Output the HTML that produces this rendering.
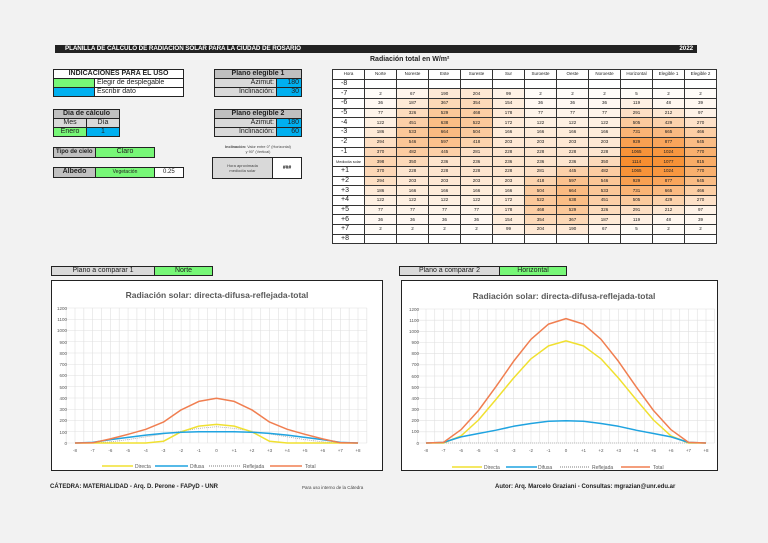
<!DOCTYPE html>
<html><head><meta charset="utf-8">
<style>
*{margin:0;padding:0;box-sizing:border-box}
body{width:768px;height:543px;background:#f2f2f2;font-family:"Liberation Sans",sans-serif;position:relative;overflow:hidden;color:#222}
.a{position:absolute}
.b{position:absolute;border:1px solid #222;font-size:7px;line-height:8px;white-space:nowrap}
.g1{background:#c0c0c0}.g2{background:#d9d9d9}.bl{background:#00b0f0}.gr{background:#77f777}.w{background:#fff}
.c{text-align:center}.r{text-align:right;padding-right:2px}
table{border-collapse:collapse;position:absolute;left:332px;top:69px;width:385px;table-layout:fixed}
td{border:1px solid #333;height:9.7px;font-size:4.5px;text-align:center;padding:0;background:#fff;line-height:8px}
td.h{font-size:7px;text-align:left;padding-left:8px}
</style></head><body>
<div class="a" style="left:55px;top:45px;width:642px;height:8px;background:#222;color:#fff;font-size:6.3px;font-weight:bold;line-height:8px;padding-left:10px;letter-spacing:-0.1px">PLANILLA DE CÁLCULO DE RADIACIÓN SOLAR PARA LA CIUDAD DE ROSARIO<span style="position:absolute;right:4px">2022</span></div>

<div class="b w c" style="left:53px;top:69px;width:131px;height:10px;font-weight:bold">INDICACIONES PARA EL USO</div>
<div class="b gr" style="left:53px;top:78px;width:42px;height:10px"></div>
<div class="b w" style="left:94px;top:78px;width:90px;height:10px;padding-left:2px">Elegir de desplegable</div>
<div class="b bl" style="left:53px;top:87px;width:42px;height:10px"></div>
<div class="b w" style="left:94px;top:87px;width:90px;height:10px;padding-left:2px">Escribir dato</div>

<div class="b g1 c" style="left:214px;top:69px;width:88px;height:10px;font-weight:bold">Plano elegible 1</div>
<div class="b g2 r" style="left:214px;top:78px;width:63px;height:10px">Azimut:</div>
<div class="b bl r" style="left:276px;top:78px;width:26px;height:10px">180</div>
<div class="b g2 r" style="left:214px;top:87px;width:63px;height:10px">Inclinación:</div>
<div class="b bl r" style="left:276px;top:87px;width:26px;height:10px">30</div>

<div class="b g1 c" style="left:53px;top:109px;width:67px;height:10px;font-weight:bold">Día de cálculo</div>
<div class="b g2 c" style="left:53px;top:118px;width:34px;height:10px">Mes</div>
<div class="b g2 c" style="left:86px;top:118px;width:34px;height:10px">Día</div>
<div class="b gr c" style="left:53px;top:127px;width:34px;height:10px">Enero</div>
<div class="b bl c" style="left:86px;top:127px;width:34px;height:10px">1</div>

<div class="b g1 c" style="left:214px;top:109px;width:88px;height:10px;font-weight:bold">Plano elegible 2</div>
<div class="b g2 r" style="left:214px;top:118px;width:63px;height:10px">Azimut:</div>
<div class="b bl r" style="left:276px;top:118px;width:26px;height:10px">180</div>
<div class="b g2 r" style="left:214px;top:127px;width:63px;height:10px">Inclinación:</div>
<div class="b bl r" style="left:276px;top:127px;width:26px;height:10px">60</div>

<div class="b g1" style="left:53px;top:147px;width:43px;height:11px;font-weight:bold;font-size:6px;padding-left:2px">Tipo de cielo</div>
<div class="b gr c" style="left:95px;top:147px;width:60px;height:11px">Claro</div>

<div class="b g1 c" style="left:53px;top:167px;width:43px;height:11px;font-weight:bold">Albedo</div>
<div class="b gr c" style="left:95px;top:167px;width:60px;height:11px;font-size:5px">Vegetación</div>
<div class="b w" style="left:154px;top:167px;width:30px;height:11px;padding-left:8px;font-size:6px">0.25</div>

<div class="a c" style="left:212px;top:145px;width:92px;font-size:3.8px;line-height:4.5px;color:#444"><b>Inclinación:</b> Valor entre 0° (Horizontal)<br>y 90° (Vertical)</div>
<div class="b g2 c" style="left:212px;top:157px;width:61px;height:22px;font-size:4px;line-height:5px;padding-top:5px;color:#444">Hora aproximada<br>mediodía solar</div>
<div class="b w c" style="left:272px;top:157px;width:30px;height:22px;font-size:5px;line-height:20px;font-weight:bold">###</div>

<div class="a" style="left:370px;top:56px;font-size:7px;font-weight:bold">Radiación total en W/m²</div>

<table id="t">
<tr><td>Hora</td><td>Norte</td><td>Noreste</td><td>Este</td><td>Sureste</td><td>Sur</td><td>Suroeste</td><td>Oeste</td><td>Noroeste</td><td>Horizontal</td><td>Elegible 1</td><td>Elegible 2</td></tr>
<tr><td class="h">-8</td><td></td><td></td><td></td><td></td><td></td><td></td><td></td><td></td><td></td><td></td><td></td></tr>
<tr><td class="h">-7</td><td>2</td><td>67</td><td>190</td><td>204</td><td>99</td><td>2</td><td>2</td><td>2</td><td>5</td><td>2</td><td>2</td></tr>
<tr><td class="h">-6</td><td>36</td><td>187</td><td>367</td><td>354</td><td>154</td><td>36</td><td>36</td><td>36</td><td>119</td><td>48</td><td>39</td></tr>
<tr><td class="h">-5</td><td>77</td><td>326</td><td>529</td><td>468</td><td>178</td><td>77</td><td>77</td><td>77</td><td>291</td><td>212</td><td>97</td></tr>
<tr><td class="h">-4</td><td>122</td><td>451</td><td>638</td><td>522</td><td>172</td><td>122</td><td>122</td><td>122</td><td>505</td><td>429</td><td>270</td></tr>
<tr><td class="h">-3</td><td>186</td><td>533</td><td>664</td><td>504</td><td>166</td><td>166</td><td>166</td><td>166</td><td>731</td><td>665</td><td>466</td></tr>
<tr><td class="h">-2</td><td>294</td><td>546</td><td>597</td><td>418</td><td>203</td><td>203</td><td>203</td><td>203</td><td>929</td><td>877</td><td>645</td></tr>
<tr><td class="h">-1</td><td>370</td><td>482</td><td>445</td><td>281</td><td>228</td><td>228</td><td>228</td><td>228</td><td>1065</td><td>1024</td><td>770</td></tr>
<tr><td style="font-size:3.8px">Mediodía solar</td><td>398</td><td>350</td><td>236</td><td>236</td><td>236</td><td>236</td><td>236</td><td>350</td><td>1114</td><td>1077</td><td>815</td></tr>
<tr><td class="h">+1</td><td>370</td><td>228</td><td>228</td><td>228</td><td>228</td><td>281</td><td>445</td><td>482</td><td>1065</td><td>1024</td><td>770</td></tr>
<tr><td class="h">+2</td><td>294</td><td>203</td><td>203</td><td>203</td><td>203</td><td>418</td><td>597</td><td>546</td><td>929</td><td>877</td><td>645</td></tr>
<tr><td class="h">+3</td><td>186</td><td>166</td><td>166</td><td>166</td><td>166</td><td>504</td><td>664</td><td>533</td><td>731</td><td>665</td><td>466</td></tr>
<tr><td class="h">+4</td><td>122</td><td>122</td><td>122</td><td>122</td><td>172</td><td>522</td><td>638</td><td>451</td><td>505</td><td>429</td><td>270</td></tr>
<tr><td class="h">+5</td><td>77</td><td>77</td><td>77</td><td>77</td><td>178</td><td>468</td><td>529</td><td>326</td><td>291</td><td>212</td><td>97</td></tr>
<tr><td class="h">+6</td><td>36</td><td>36</td><td>36</td><td>36</td><td>154</td><td>354</td><td>367</td><td>187</td><td>119</td><td>48</td><td>39</td></tr>
<tr><td class="h">+7</td><td>2</td><td>2</td><td>2</td><td>2</td><td>99</td><td>204</td><td>190</td><td>67</td><td>5</td><td>2</td><td>2</td></tr>
<tr><td class="h">+8</td><td></td><td></td><td></td><td></td><td></td><td></td><td></td><td></td><td></td><td></td><td></td></tr>
</table>
<script>
document.querySelectorAll('#t tr').forEach(function(tr,i){if(i==0)return;var c=tr.children;for(var j=1;j<c.length;j++){var v=parseInt(c[j].textContent);if(isNaN(v))continue;var t=Math.min(v/1114,1);c[j].style.background='rgb('+Math.round(255-8*t)+','+Math.round(252-110*t)+','+Math.round(248-200*t)+')';}});
</script>

<div class="b g2 c" style="left:51px;top:266px;width:104px;height:10px">Plano a comparar 1</div>
<div class="b gr c" style="left:154px;top:266px;width:59px;height:10px">Norte</div>
<div class="b g2 c" style="left:399px;top:266px;width:101px;height:10px">Plano a comparar 2</div>
<div class="b gr c" style="left:499px;top:266px;width:68px;height:10px">Horizontal</div>

<div class="a" style="left:51px;top:280px;width:332px;height:191px;background:#fff;border:1px solid #222"></div>
<div class="a" style="left:401px;top:280px;width:317px;height:191px;background:#fff;border:1px solid #222"></div>

<svg class="a" style="left:0;top:0" width="768" height="543" font-family="Liberation Sans, sans-serif">
<g id="c1"></g><g id="c2"></g>
<text x="217" y="298" font-size="8.5" fill="#595959" text-anchor="middle" font-weight="bold">Radiación solar: directa-difusa-reflejada-total</text>
<text x="564" y="299" font-size="8.5" fill="#595959" text-anchor="middle" font-weight="bold">Radiación solar: directa-difusa-reflejada-total</text>
<g font-size="4.5" fill="#595959" text-anchor="end">
<text x="67" y="310">1200</text><text x="67" y="321">1100</text><text x="67" y="332">1000</text><text x="67" y="344">900</text><text x="67" y="355">800</text><text x="67" y="366">700</text><text x="67" y="377">600</text><text x="67" y="389">500</text><text x="67" y="400">400</text><text x="67" y="411">300</text><text x="67" y="422">200</text><text x="67" y="434">100</text><text x="67" y="445">0</text>
<text x="419" y="311">1200</text><text x="419" y="322">1100</text><text x="419" y="333">1000</text><text x="419" y="344">900</text><text x="419" y="355">800</text><text x="419" y="366">700</text><text x="419" y="378">600</text><text x="419" y="389">500</text><text x="419" y="400">400</text><text x="419" y="411">300</text><text x="419" y="422">200</text><text x="419" y="433">100</text><text x="419" y="445">0</text>
</g>
<g font-size="5" fill="#595959">
<text x="135" y="468">Directa</text><text x="190" y="468">Difusa</text><text x="243" y="468">Reflejada</text><text x="305" y="468">Total</text>
<text x="484" y="469">Directa</text><text x="538" y="469">Difusa</text><text x="592" y="469">Reflejada</text><text x="653" y="469">Total</text>
</g>
<g stroke-width="1.5">
<line x1="102" y1="466" x2="133" y2="466" stroke="#f0e030"/><line x1="155" y1="466" x2="188" y2="466" stroke="#1fa3e0"/><line x1="209" y1="466" x2="241" y2="466" stroke="#aaa" stroke-dasharray="1,1"/><line x1="270" y1="466" x2="302" y2="466" stroke="#f07e50"/>
<line x1="452" y1="467" x2="482" y2="467" stroke="#f0e030"/><line x1="506" y1="467" x2="537" y2="467" stroke="#1fa3e0"/><line x1="560" y1="467" x2="590" y2="467" stroke="#aaa" stroke-dasharray="1,1"/><line x1="621" y1="467" x2="650" y2="467" stroke="#f07e50"/>
</g>
</svg>

<div class="a" style="left:50px;top:484px;font-size:6px;font-weight:bold">CÁTEDRA: MATERIALIDAD - Arq. D. Perone - FAPyD - UNR</div>
<div class="a" style="left:302px;top:485px;font-size:4.5px;color:#444">Para uso interno de la Cátedra</div>
<div class="a" style="left:495px;top:484px;font-size:6px;font-weight:bold">Autor: Arq. Marcelo Graziani - Consultas: mgrazian@unr.edu.ar</div>

<script>
function chart(id,x0,x1,y0,y1,series){
 var g=document.getElementById(id),s='',st=(x1-x0)/16,k=(y0-y1)/1200;
 for(var i=0;i<=34;i++){var x=x0-st/2+i*st/2;s+='<line x1="'+x+'" y1="'+y1+'" x2="'+x+'" y2="'+y0+'" stroke="#e0e0e0" stroke-width="0.6"/>';}
 for(var j=0;j<=12;j++){var y=y0-j*100*k;s+='<line x1="'+(x0-st/2)+'" y1="'+y+'" x2="'+(x1+st/2)+'" y2="'+y+'" stroke="#e0e0e0" stroke-width="0.6"/>';}
 for(var h=-8;h<=8;h++){var x=x0+(h+8)*st;s+='<text x="'+x+'" y="'+(y0+9)+'" font-size="4.5" fill="#595959" text-anchor="middle">'+(h>0?'+'+h:h)+'</text>';}
 series.forEach(function(se){var p=se.d.map(function(v,i){return (x0+i*st).toFixed(1)+','+(y0-v*k).toFixed(1)}).join(' ');
 s+='<polyline points="'+p+'" fill="none" stroke="'+se.c+'" stroke-width="'+(se.w||1.5)+'" stroke-linejoin="round"'+(se.da?' stroke-dasharray="'+se.da+'"':'')+'/>';});
 g.innerHTML=s;
}
chart('c1',75,358,443,308,[
 {c:'#aaa',w:0.8,da:'1,1',d:[0,0,10,30,55,80,105,130,145,130,105,80,55,30,10,0,0]},
 {c:'#f0e030',d:[0,0,0,0,0,15,100,150,165,150,100,15,0,0,0,0,0]},
 {c:'#1fa3e0',d:[0,5,30,50,70,85,95,100,100,100,95,85,70,50,30,5,0]},
 {c:'#f07e50',d:[0,2,36,77,122,186,294,370,398,370,294,186,122,77,36,2,0]}]);
chart('c2',426,706,443,309,[
 {c:'#aaa',w:0.8,da:'1,1',d:[0,0,0,0,0,0,0,0,0,0,0,0,0,0,0,0,0]},
 {c:'#f0e030',d:[0,0,64,206,390,581,754,870,914,870,754,581,390,206,64,0,0]},
 {c:'#1fa3e0',d:[0,5,55,85,115,150,175,195,200,195,175,150,115,85,55,5,0]},
 {c:'#f07e50',d:[0,5,119,291,505,731,929,1065,1114,1065,929,731,505,291,119,5,0]}]);
</script>
</body></html>
